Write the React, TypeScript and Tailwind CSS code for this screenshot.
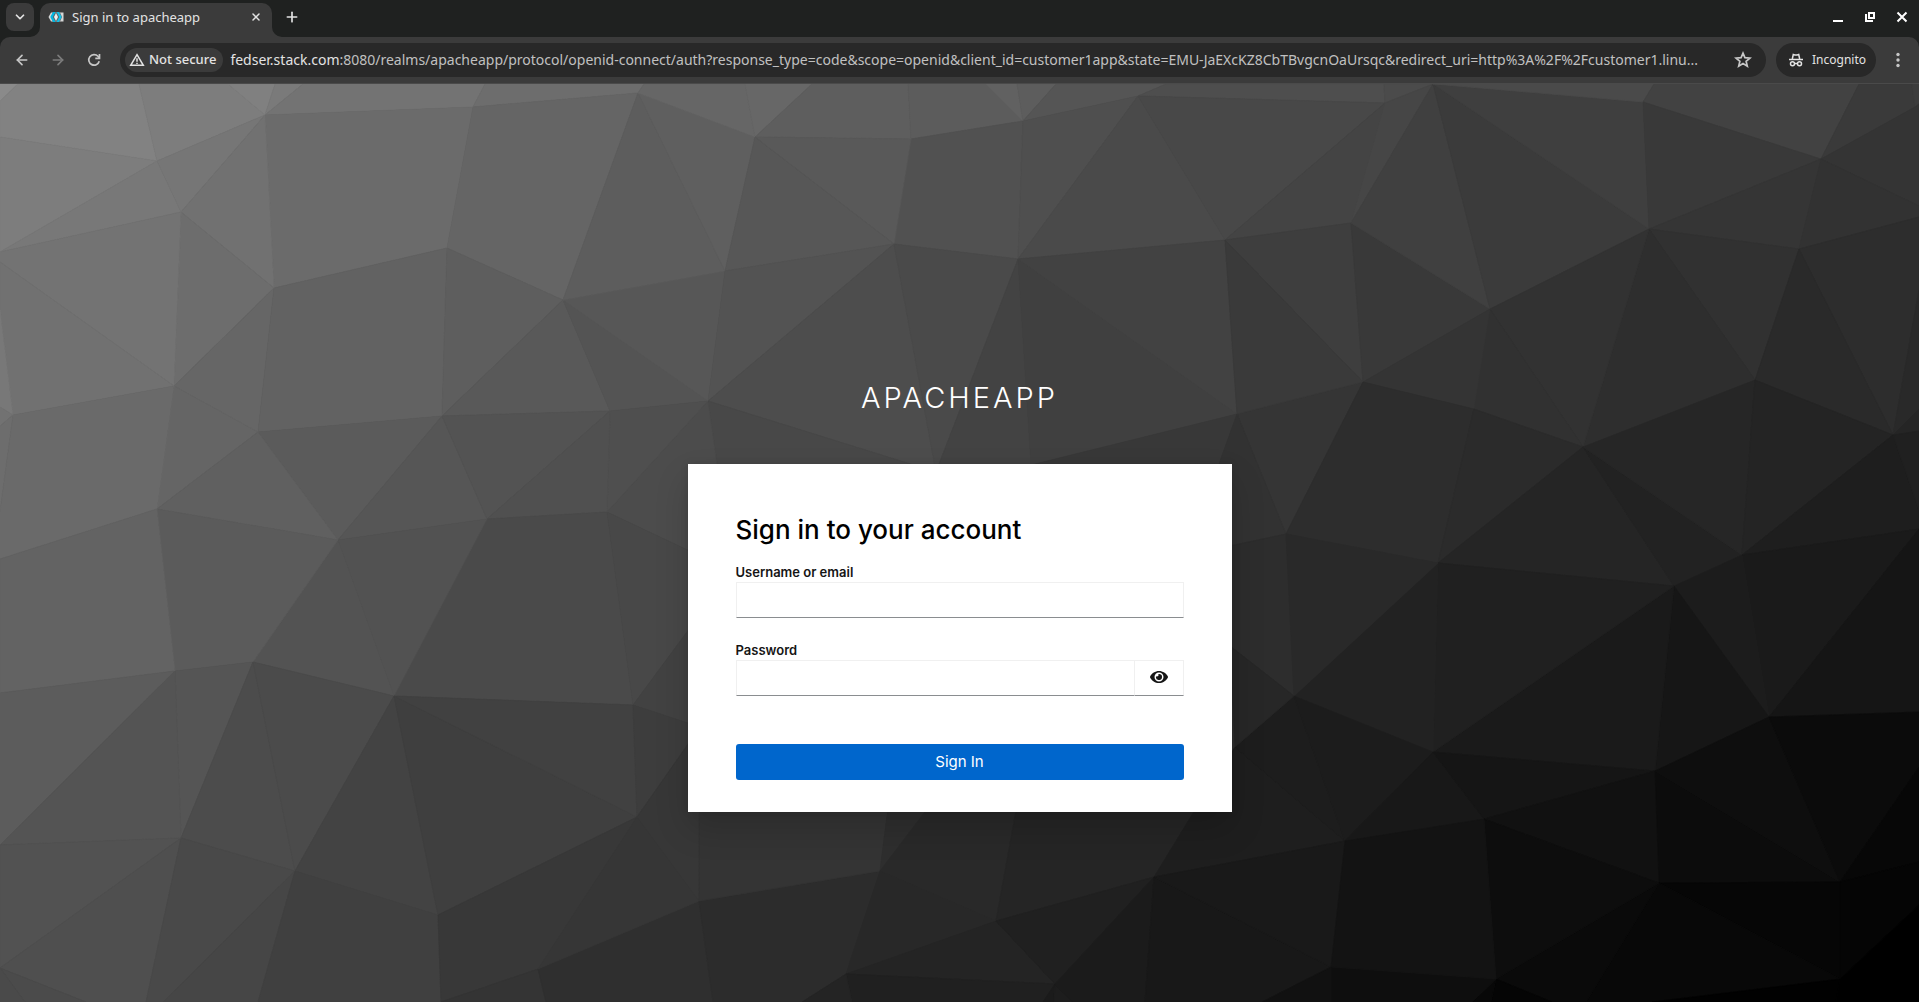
import { useState } from 'react';
import { FaEye, FaEyeSlash } from 'react-icons/fa';
import { ArrowLeft, ArrowRight, ChevronDown, Plus, X } from 'lucide-react';

// Low-poly backdrop: named mesh points, then one entry per facet
const POINTS: Record<string, [number, number]> = {
  t0: [0, 84], t1: [18, 84], t2: [139, 84], t3: [228, 84], t4: [275, 84], t5: [303, 84], t6: [485, 84],
  t7: [644, 84], t8: [745, 84], t9: [812, 84], t10: [908, 84], t11: [986, 84], t12: [1017, 84], t13: [1056, 84],
  t15: [1166, 84], tA: [1384, 84], tB: [1654, 84], t17: [1859, 84], t18: [1912, 84], t19: [1919, 84],
  l0: [0, 101], l1: [0, 137], l2: [0, 262], l3: [0, 310], l4: [0, 407], l5: [0, 426], l6: [0, 512],
  l7: [0, 559], l8: [0, 693], l9: [0, 845], l10: [0, 1002],
  b0: [25, 1002], b1: [86, 1002], b2: [146, 1002], b3: [163, 1002], b4: [258, 1002], b5: [441, 1002],
  b6: [546, 1002], b7: [713, 1002], b8: [802, 1002], b9: [852, 1002], b10: [1043, 1002], b11: [1054, 1002],
  b12: [1072, 1002], b13: [1145, 1002], b14: [1262, 1002], b15: [1331, 1002], b16: [1472, 1002],
  b17: [1491, 1002], b18: [1552, 1002], b19: [1586, 1002], b20: [1652, 1002], b21: [1836, 1002], b22: [1919, 1002],
  r0: [1919, 206], r1: [1919, 217], r2: [1919, 290], r3: [1919, 409], r4: [1919, 431], r5: [1919, 510],
  r6: [1919, 529], r7: [1919, 712], r8: [1919, 767], r9: [1919, 862], r10: [1919, 905], rA: [1919, 104],
  c1: [889, 800], c2: [934, 800], c3: [1018, 800], c4: [1201, 800], d1: [1219, 464], d2: [1200, 535],
  e1: [1230, 546], e2: [1230, 646], x1: [732, 571], x2: [700, 727],
  v1: [157, 161], v2: [265, 115], v3: [181, 212], v4: [0, 252], v5: [274, 288], v6: [473, 107], v7: [638, 93],
  v8: [447, 248], v9: [563, 300], v10: [174, 386], v11: [13, 415], v12: [258, 432], v13: [442, 416],
  v14: [610, 411], v15: [157, 509], v16: [338, 540], v17: [487, 519], v18: [607, 512], v19: [175, 671],
  v20: [253, 662], v21: [394, 696], v22: [633, 705], v23: [181, 838], v24: [295, 871], v25: [438, 915],
  v26: [637, 817], v27: [538, 969], v28: [0, 968], v29: [699, 901], v30: [755, 137], v31: [911, 139],
  v32: [1023, 121], v33: [1138, 96], v34: [894, 244], v35: [725, 271], v36: [1018, 259], v37: [1225, 240],
  v38: [708, 401], v39: [1237, 414], v41: [1385, 103], v42: [936, 472], v43: [1031, 465], v44: [1433, 84],
  v45: [1643, 102], v46: [1821, 159], v47: [1649, 229], v48: [1351, 223], v49: [1490, 309], v50: [1799, 249],
  v51: [1363, 382], v52: [1474, 409], v53: [1583, 447], v54: [1755, 380], v55: [1893, 435], v56: [1286, 534],
  v57: [1915, 107], v58: [1742, 555], v59: [1674, 586], v60: [1438, 563], v61: [1294, 696], v62: [1433, 752],
  v63: [1655, 771], v64: [1769, 717], v65: [1484, 819], v66: [1345, 841], v67: [1659, 883], v68: [1840, 882],
  v69: [1331, 967], v70: [1496, 979], v71: [1840, 979], v72: [880, 871], v73: [846, 974], v74: [996, 921],
  v75: [1154, 877], v76: [1055, 984], v77: [1235, 747],
};

// "<grey level in hex> <point> <point> ..."
const FACETS = [
  '8a t0 t1 l0', '82 l0 t1 t2 v1 l1', '7d t2 t3 v2 v1', '80 t3 t4 v2', '7a t4 t5 v2', '7d l1 v1 v4',
  '78 v1 v3 v4', '76 v1 v2 v3', '73 v2 t5 t6 v6', '6d v6 t6 t7 v7', '6b v2 v6 v8 v5', '71 v2 v5 v3',
  '65 v6 v7 v9 v8', '6d v3 v5 v10', '73 v4 v3 v10 l2', '71 l2 v10 v11 l3', '78 l3 v11 l4', '72 l4 v11 l5',
  '6d l5 v11 l6', '66 v5 v12 v10', '62 v5 v8 v13 v12', '5e v8 v9 v13', '59 v9 v14 v13', '54 v9 v38 v14',
  '57 v9 v35 v38', '5d v7 v35 v9', '5f v7 v30 v35', '66 v7 t7 t8 v30', '67 v30 t8 t9', '5e v30 t9 t10 v31',
  '5c v31 t10 t11 v32', '61 v32 t11 t12', '5d v32 t12 t13', '55 v32 t13 t15 v33', '4e v33 t15 tA v41',
  '4b v41 tA v44', '51 v31 v32 v36 v34', '59 v30 v31 v34', '57 v30 v34 v35', '4f v32 v33 v36',
  '4a v33 v37 v36', '48 v33 v41 v37', '44 v41 v48 v37', '46 v41 v44 v48', '53 v35 v34 v38',
  '4d v34 v42 v38', '4a v34 v36 v42', '43 v36 v43 v42', '40 v36 v39 v43', '42 v36 v37 v39',
  '48 v38 v42 x1', '4c v38 x1 v18', '4f v18 v14 v38', '65 v10 v12 v15', '6a v11 v10 v15 l7 l6',
  '5b v12 v13 v16', '60 v12 v16 v15', '56 v13 v17 v16', '53 v13 v14 v17', '50 v14 v18 v17',
  '4a v17 v18 v22 v21', '52 v17 v21 v16', '53 v16 v21 v20', '5b v16 v20 v19 v15', '63 v15 v19 l8 l7',
  '5c v19 l9 l8', '55 v19 v20 v23', '54 v19 v23 l9', '52 l9 v23 v28', '4c v20 v24 v23', '4b v20 v21 v24',
  '43 v21 v25 v24', '3f v21 v26 v25', '41 v21 v22 v26', '48 v18 x1 v22', '42 x1 x2 v22', '3d x2 v22 v26',
  '37 x2 v26 v29', '4f v28 v23 b2 b1', '49 v23 b2 b3 v24', '46 v24 b3 b4', '40 v24 b4 b5 v25',
  '38 v25 b5 v27 v26', '34 b5 v27 b6', '2f v27 v29 b7 b6', '36 v26 v29 v27', '4b v28 b1 b0', '4a v28 b0 l10',
  '2c v29 v72 v73 b8 b7', '34 v29 x2 c1 v72', '2e v72 c1 c2', '29 v72 c2 c3 v74', '25 v74 c3 c4 v75',
  '1e v75 c4 v77 v66', '1d v77 v61 v66', '28 v72 v74 v73', '24 v73 v74 v76', '20 v74 v75 v76',
  '20 v73 v76 b10 b9', '24 v73 b8 b9', '1b v76 b10 b11', '1d v76 b11 b12', '1b v75 v76 b12 b13',
  '18 v75 b13 b14 v69', '19 v75 v69 v66', '35 v39 v51 v56', '38 v43 v39 d1', '32 v39 d1 d2 e1 v56',
  '2d v56 e1 e2 v61', '27 e2 v61 v77', '3e v37 v48 v51', '3a v37 v51 v39', '39 v48 v49 v51',
  '40 v48 v44 v49', '3b v44 v47 v49', '3f v44 v45 v47', '4a v44 tB v45', '42 v45 tB t17 v46',
  '3a v46 t17 t18 v57', '3c v57 t18 t19 rA', '34 v46 v57 rA r0', '39 v45 v46 v47', '35 v46 v50 v47',
  '32 v46 r0 r1 v50', '31 v47 v50 v54', '2e v47 v54 v53', '32 v47 v53 v49', '31 v49 v53 v52',
  '34 v49 v52 v51', '2d v50 r1 r2 v55', '29 v55 r2 r3', '2a v50 v55 v54', '2d v51 v52 v60 v56',
  '2b v52 v53 v60', '25 v53 v59 v60', '22 v53 v58 v59', '26 v53 v54 v58', '24 v54 v55 v58',
  '1e v55 r5 r6 v58', '25 v55 r3 r4', '20 v55 r4 r5', '1a v58 r6 v64', '1c v58 v64 v59', '15 v64 r6 r7',
  '16 v59 v64 v63', '1a v59 v63 v62', '20 v59 v62 v60', '22 v60 v62 v61', '29 v60 v61 v56',
  '1c v61 v62 v66', '18 v62 v65 v66', '15 v62 v63 v65', '11 v63 v67 v65', '0c v63 v68 v67',
  '0e v63 v64 v68', '0b v64 r7 r8 v68', '07 v68 r8 r9', '05 v68 r9 r10 v71', '00 v71 r10 b22 b21',
  '06 v67 v68 v71', '08 v67 v71 b20 b19', '01 v71 b20 b21', '0a v67 b19 b18 v70', '05 v70 b17 b18',
  '08 v70 b16 b17', '0e v69 v70 b16 b15', '11 v69 b15 b14', '0d v65 v67 v70', '13 v66 v65 v70 v69',
];

function Backdrop() {
  return (
    <svg
      className="absolute inset-0 h-full w-full"
      viewBox="0 84 1919 918"
      preserveAspectRatio="xMidYMid slice"
      aria-hidden="true"
    >
      <rect x="0" y="84" width="1919" height="918" fill="#303030" />
      {FACETS.map((facet) => {
        const [grey, ...names] = facet.split(' ');
        const color = `#${grey}${grey}${grey}`;
        return (
          <polygon
            key={facet}
            points={names.map((n) => POINTS[n].join(',')).join(' ')}
            fill={color}
            stroke={color}
            strokeWidth="0.7"
          />
        );
      })}
    </svg>
  );
}

function KeycloakIcon() {
  return (
    <svg className="h-4 w-4 shrink-0" viewBox="0 0 16 16" aria-hidden="true">
      <path d="M3 3.500h12.500v9H3L.5 8z" fill="#d6d6d6" />
      <path d="M5 3.500h7l2 4.500-2 4.500H5L3 8z" fill="#5a6468" />
      <path d="M7.500 3 4.800 8l2.700 5H5L2.300 8 5 3z" fill="#00b8e3" />
      <path d="M8.500 3H11l2.700 5-2.700 5H8.500l2.700-5z" fill="#12bfe6" />
      <path d="M8 4 10 8 8 12 6 8z" fill="#ededed" />
    </svg>
  );
}

function ReloadIcon() {
  return (
    <svg className="h-4 w-4" viewBox="0 0 16 16" fill="none" stroke="currentColor" strokeWidth="1.7" aria-hidden="true">
      <path d="M13.200 9.200A5.300 5.300 0 1 1 12 4.300l1.500 1.700" />
      <path d="M13.500 2v4.300H9.300" />
    </svg>
  );
}

function WarningIcon() {
  return (
    <svg className="h-4 w-4" viewBox="0 0 16 16" fill="none" stroke="currentColor" strokeWidth="1.500" aria-hidden="true">
      <path d="M8 2.700 14.300 13.300H1.700z" />
      <path d="M8 6.300v3.500M8 10.700v1.300" />
    </svg>
  );
}

function StarIcon() {
  return (
    <svg className="h-[18px] w-[18px]" viewBox="0 0 18 18" fill="none" stroke="currentColor" strokeWidth="1.700" aria-hidden="true">
      <path d="M9 2.200l1.900 4.500 5 .4-3.800 3.200 1.200 4.900L9 12.600l-4.300 2.600 1.200-4.900L2.100 7.100l5-.4z" />
    </svg>
  );
}

function IncognitoIcon() {
  return (
    <svg className="h-4 w-4" viewBox="0 0 16 16" fill="none" stroke="currentColor" strokeWidth="1.500" aria-hidden="true">
      <path d="M4.300 7 5.300 2.500l1.500.4h2.400l1.500-.4L11.700 7" />
      <path d="M1 7.500h14" />
      <circle cx="4.500" cy="11.800" r="2" />
      <circle cx="11.500" cy="11.800" r="2" />
      <path d="M6.500 11.500h3" />
    </svg>
  );
}

function WindowControls() {
  return (
    <div className="ml-auto flex items-center pb-[3px] text-white">
      <button type="button" aria-label="Minimize" className="flex h-8 w-8 items-center justify-center">
        <svg className="h-3 w-3" viewBox="0 0 12 12" aria-hidden="true">
          <path d="M1 9h10v2H1z" fill="currentColor" />
        </svg>
      </button>
      <button type="button" aria-label="Restore" className="flex h-8 w-8 items-center justify-center">
        <svg className="h-3 w-3" viewBox="0 0 12 12" fill="none" stroke="currentColor" strokeWidth="2" aria-hidden="true">
          <path d="M5 2h5v5H5z" />
          <path d="M2 3v7h7" />
        </svg>
      </button>
      <button type="button" aria-label="Close" className="flex h-8 w-8 items-center justify-center">
        <svg className="h-3 w-3" viewBox="0 0 12 12" stroke="currentColor" strokeWidth="2" aria-hidden="true">
          <path d="M1.500 1.500l9 9M10.500 1.500l-9 9" />
        </svg>
      </button>
    </div>
  );
}

function BrowserBar() {
  return (
    <header className="font-['Noto_Sans',sans-serif] text-[#e3e3e3]">
      {/* Tab strip */}
      <div className="flex h-[37px] items-center bg-[#1f2120] pr-[1px] pl-[6px]">
        <button
          type="button"
          aria-label="Search tabs"
          className="mb-[3px] flex h-7 w-7 items-center justify-center rounded-lg bg-[#3b3b3b]"
        >
          <ChevronDown className="h-3.5 w-3.5" strokeWidth={3} />
        </button>
        <div className="-ml-1 flex h-full w-[252px] items-end">
          <svg className="h-2.5 w-2.5 shrink-0" viewBox="0 0 10 10" aria-hidden="true">
            <path d="M10 0v10H0A10 10 0 0 0 10 0z" fill="#3b3b3b" />
          </svg>
          <div className="flex h-[34px] min-w-0 flex-1 items-center rounded-t-[10px] bg-[#3b3b3b] px-2 pb-[6px]">
            <KeycloakIcon />
            <span className="ml-2 flex-1 truncate text-[13px] leading-5">Sign in to apacheapp</span>
            <button type="button" aria-label="Close tab" className="flex h-4 w-4 items-center justify-center">
              <X className="h-3 w-3" strokeWidth={3} />
            </button>
          </div>
          <svg className="h-2.5 w-2.5 shrink-0" viewBox="0 0 10 10" aria-hidden="true">
            <path d="M0 0v10h10A10 10 0 0 1 0 0z" fill="#3b3b3b" />
          </svg>
        </div>
        <button type="button" aria-label="New tab" className="mb-[3px] ml-0.5 flex h-4 w-4 items-center justify-center">
          <Plus className="h-4 w-4" strokeWidth={2.5} />
        </button>
        <WindowControls />
      </div>

      {/* Toolbar */}
      <div className="bg-[#1f2120]">
        <div className="flex h-[47px] items-center rounded-t-[10px] border-b border-[#4a4a4a] bg-[#3b3b3b] pr-[11px] pl-3">
          <button type="button" aria-label="Back" className="flex h-5 w-5 items-center justify-center text-[#c7c7c7]">
            <ArrowLeft className="h-4 w-4" strokeWidth={2.5} />
          </button>
          <button type="button" aria-label="Forward" className="ml-4 flex h-5 w-5 items-center justify-center text-[#7c7c7c]">
            <ArrowRight className="h-4 w-4" strokeWidth={2.5} />
          </button>
          <button type="button" aria-label="Reload" className="ml-4 flex h-5 w-5 items-center justify-center text-[#c7c7c7]">
            <ReloadIcon />
          </button>

          <div className="ml-4 flex h-[34px] min-w-0 flex-1 items-center rounded-full bg-[#282828] pr-[14px] pl-[5px]">
            <button
              type="button"
              className="flex h-6 shrink-0 items-center gap-1 rounded-full bg-[#3b3b3b] pr-[7px] pl-1 text-[13px] font-medium"
            >
              <WarningIcon />
              Not secure
            </button>
            <p className="ml-[7px] min-w-0 flex-1 truncate text-[14px] leading-6 text-[#c0c0c0]">
              <span className="text-[#e3e3e3]">fedser.stack.com</span>
              :8080/realms/apacheapp/protocol/openid-connect/auth?response_type=code&amp;scope=openid&amp;client_id=customer1app&amp;state=EMU-JaEXcKZ8CbTBvgcnOaUrsqc&amp;redirect_uri=http%3A%2F%2Fcustomer1.linu...
            </p>
            <button type="button" aria-label="Bookmark this tab" className="ml-2 text-[#c7c7c7]">
              <StarIcon />
            </button>
          </div>

          <button
            type="button"
            className="ml-[10px] flex h-[34px] w-[100px] items-center gap-2 rounded-full bg-[#282828] pl-3 text-[12px]"
          >
            <IncognitoIcon />
            Incognito
          </button>
          <button type="button" aria-label="Menu" className="ml-3 flex h-5 w-5 items-center justify-center text-[#c7c7c7]">
            <svg className="h-4 w-4" viewBox="0 0 16 16" fill="currentColor" aria-hidden="true">
              <circle cx="8" cy="2.500" r="1.700" />
              <circle cx="8" cy="8" r="1.700" />
              <circle cx="8" cy="13.500" r="1.700" />
            </svg>
          </button>
        </div>
      </div>
    </header>
  );
}

function LoginForm() {
  const [username, setUsername] = useState('');
  const [password, setPassword] = useState('');
  const [showPassword, setShowPassword] = useState(false);

  return (
    <form
      onSubmit={(e) => e.preventDefault()}
      className="w-full max-w-[544px] bg-white px-12 pt-12 pb-8 shadow-[0_16px_32px_rgba(3,3,3,0.16),0_0_8px_rgba(3,3,3,0.1)]"
    >
      <h1 className="text-[26px] leading-9 font-medium text-black">Sign in to your account</h1>

      <div className="mt-[15px]">
        <label htmlFor="username" className="block text-[13px] leading-[19px] font-semibold text-[#151515]">
          Username or email
        </label>
        <input
          id="username"
          type="text"
          value={username}
          onChange={(e) => setUsername(e.target.value)}
          className="block h-9 w-full border border-[#f0f0f0] border-b-[#8a8d90] px-2 text-base outline-none"
        />
      </div>

      <div className="mt-[23px]">
        <label htmlFor="password" className="block text-[13px] leading-[19px] font-semibold text-[#151515]">
          Password
        </label>
        <div className="flex">
          <input
            id="password"
            type={showPassword ? 'text' : 'password'}
            value={password}
            onChange={(e) => setPassword(e.target.value)}
            className="h-9 min-w-0 flex-1 border border-r-0 border-[#f0f0f0] border-b-[#8a8d90] px-2 text-base outline-none"
          />
          <button
            type="button"
            aria-label="Show password"
            onClick={() => setShowPassword(!showPassword)}
            className="flex h-9 w-[50px] items-center justify-center border border-[#f0f0f0] border-b-[#8a8d90] pb-[2px] text-[#151515]"
          >
            {showPassword ? <FaEyeSlash className="h-4 w-[18px]" /> : <FaEye className="h-4 w-[18px]" />}
          </button>
        </div>
      </div>

      <button type="submit" className="mt-12 block h-9 w-full rounded-[3px] bg-[#0066cc] text-[15px] text-white">
        Sign In
      </button>
    </form>
  );
}

export default function App() {
  return (
    <div className="flex min-h-screen flex-col bg-black">
      <BrowserBar />
      <main className="relative flex flex-1 flex-col items-center overflow-hidden font-['Inter',sans-serif]">
        <Backdrop />
        <div className="relative flex w-full flex-col items-center pt-[296px]">
          <div className="pb-12 text-[29px] leading-[36px] font-light tracking-[3px] text-white uppercase">
            apacheapp
          </div>
          <LoginForm />
        </div>
      </main>
    </div>
  );
}
